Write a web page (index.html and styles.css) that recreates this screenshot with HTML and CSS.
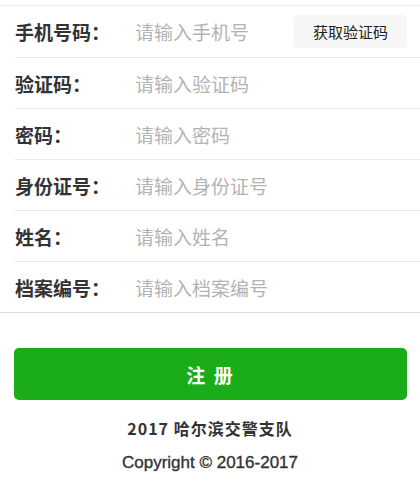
FILE: index.html
```html
<!DOCTYPE html>
<html lang="zh-CN">
<head>
<meta charset="utf-8">
<link rel="stylesheet" href="styles.css">
</head>
<body>
<div class="page">
  <div class="form">
    <div class="row">
      <label class="label">手机号码：</label>
      <input class="field" type="text" placeholder="请输入手机号">
      <button class="code-btn" type="button">获取验证码</button>
    </div>
    <div class="row">
      <label class="label">验证码：</label>
      <input class="field" type="text" placeholder="请输入验证码">
    </div>
    <div class="row">
      <label class="label">密码：</label>
      <input class="field" type="text" placeholder="请输入密码">
    </div>
    <div class="row">
      <label class="label">身份证号：</label>
      <input class="field" type="text" placeholder="请输入身份证号">
    </div>
    <div class="row">
      <label class="label">姓名：</label>
      <input class="field" type="text" placeholder="请输入姓名">
    </div>
    <div class="row row-last">
      <label class="label">档案编号：</label>
      <input class="field" type="text" placeholder="请输入档案编号">
    </div>
  </div>
  <div class="actions">
    <button class="submit" type="button">注 册</button>
  </div>
  <div class="footer">
    <p class="org">2017 哈尔滨交警支队</p>
    <p class="copy">Copyright © 2016-2017</p>
  </div>
</div>
</body>
</html>
```
FILE: styles.css
```css
* { box-sizing: border-box; }
html, body { margin: 0; padding: 0; background: #fff; }
body {
  font-family: "Noto Sans CJK SC", "Noto Sans", sans-serif;
  color: #333;
}
.page { padding-top: 5px; }
.form {
  border-top: 1px solid #ebebeb;
  border-bottom: 1px solid #dcdcdc;
}
.row {
  display: flex;
  align-items: center;
  height: 51px;
  margin-left: 15px;
  padding-right: 13px;
  border-bottom: 1px solid #e8e8e8;
}
.row:first-child { height: 52px; }
.row-last { border-bottom: none; height: 50px; }
.label {
  width: 120px;
  flex: none;
  font-size: 19px;
  font-weight: 700;
  color: #333;
  line-height: 1;
}
.field {
  flex: 1;
  min-width: 0;
  border: none;
  outline: none;
  padding: 0;
  font-family: inherit;
  font-size: 19px;
  color: #333;
  background: transparent;
}
.field::placeholder { color: #b3b3b3; }
.code-btn {
  flex: none;
  width: 113px;
  height: 33px;
  border: none;
  border-radius: 4px;
  background: #f6f6f6;
  font-family: inherit;
  font-size: 15px;
  color: #222;
  padding: 0;
  margin-top: -1px;
}
.actions { padding: 35px 13px 0 14px; }
.submit {
  display: block;
  width: 100%;
  height: 52px;
  border: none;
  border-radius: 5px;
  background: #1aad19;
  color: #fff;
  font-family: inherit;
  font-size: 19px;
  font-weight: 700;
  letter-spacing: 2px;
  padding: 0;
}
.footer { text-align: center; padding-top: 16px; }
.org {
  margin: 0;
  font-size: 16px;
  font-weight: 700;
  line-height: 24px;
  letter-spacing: 1px;
  color: #333;
}
.copy {
  margin: 11px 0 0;
  font-family: "Liberation Sans", "Noto Sans", sans-serif;
  font-size: 17px;
  font-weight: 400;
  line-height: 24px;
  color: #333;
  -webkit-text-stroke: 0.35px #333;
}
```
